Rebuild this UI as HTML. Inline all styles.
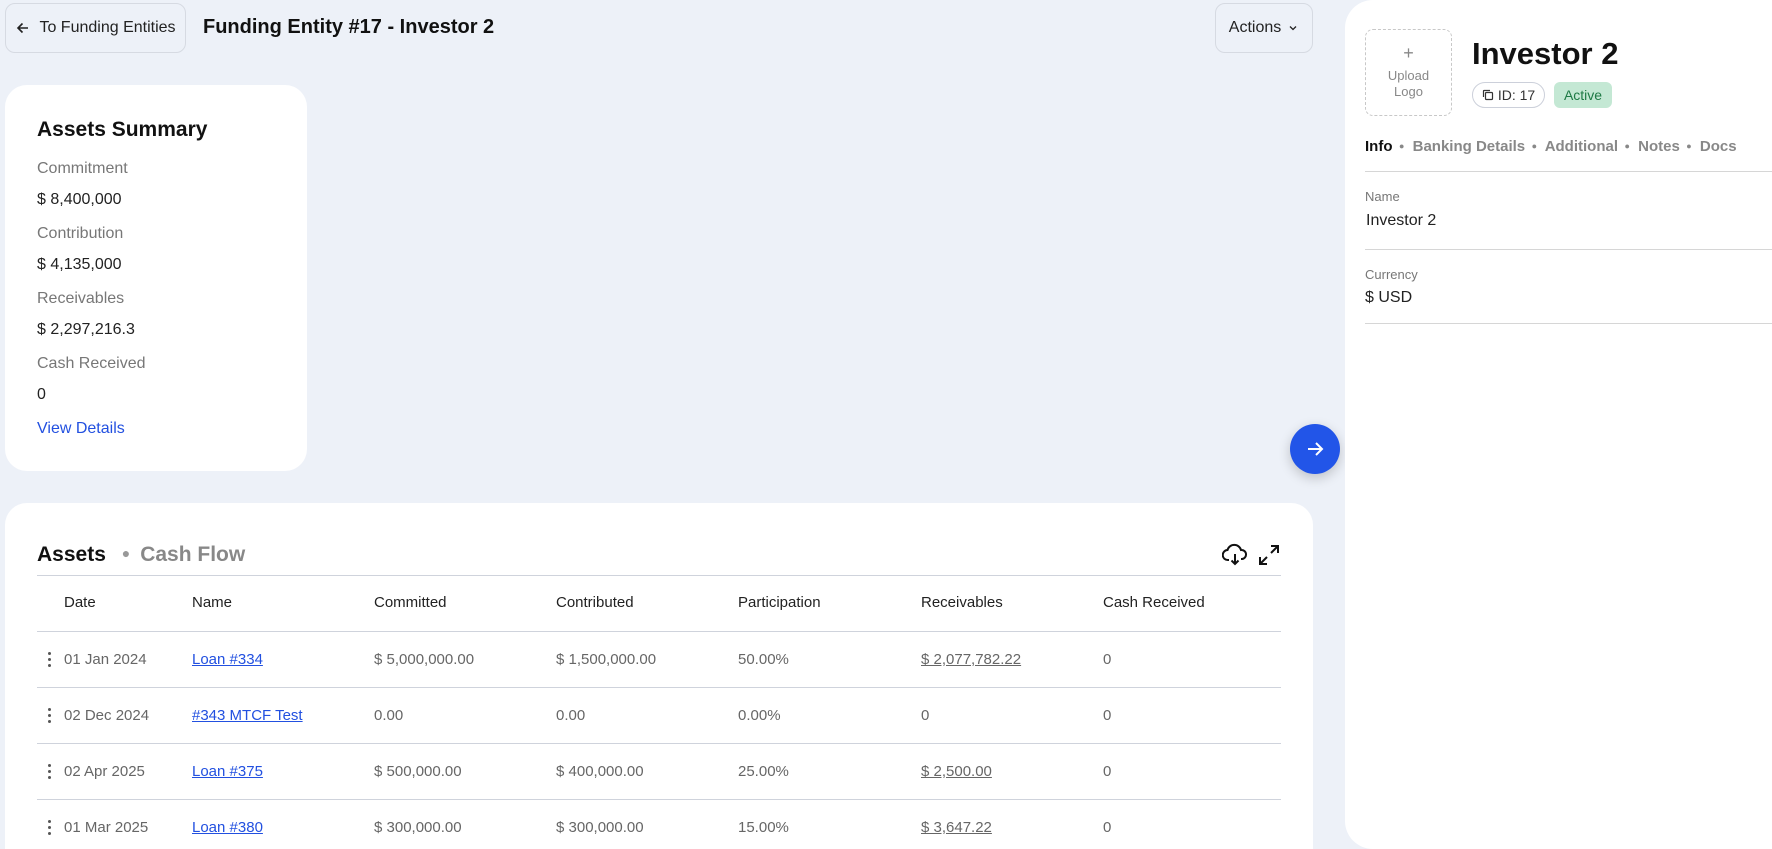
<!DOCTYPE html>
<html><head><meta charset="utf-8"><style>
*{box-sizing:border-box;margin:0;padding:0}
html{width:1772px;height:849px;overflow:hidden}
body{width:1772px;height:849px;overflow:hidden;background:#edf1f8;font-family:"Liberation Sans",sans-serif;color:#111;position:relative}
.abs{position:absolute}
.btn{border:1px solid #d6dae2;border-radius:10px;background:#edf1f8;font-size:16px;color:#222;display:flex;align-items:center;justify-content:center}
.card{background:#fff;border-radius:22px}
.lbl{color:#777;font-size:16px}
.val{color:#222;font-size:16px}
.th{position:absolute;top:594px;font-size:15px;color:#222}
.hl{position:absolute;left:37px;width:1244px;height:1px;background:#cfd3dc}
.td{position:absolute;font-size:15px;color:#666}
a{color:#2250e0;text-decoration:underline}
.u{color:#666;text-decoration:underline}
.dots{position:absolute;left:48px;width:4px}
.dots i{display:block;width:3px;height:3px;border-radius:50%;background:#555;margin-bottom:3px}
.sep{font-size:9px;margin:0 4px;vertical-align:2px}
</style></head><body>

<div class="abs btn" style="left:5px;top:3px;width:181px;height:50px">
<svg width="16" height="16" viewBox="0 0 16 16" style="margin-right:8px"><path d="M13 8H3M7.5 3.5L3 8l4.5 4.5" stroke="#222" stroke-width="1.6" fill="none"/></svg>To Funding Entities</div>
<div class="abs" style="left:203px;top:16px;font-size:20px;font-weight:bold">Funding Entity #17 - Investor 2</div>
<div class="abs btn" style="left:1215px;top:3px;width:98px;height:50px">Actions<svg width="12" height="12" viewBox="0 0 12 12" style="margin-left:6px"><path d="M3 4.5L6 7.5 9 4.5" stroke="#222" stroke-width="1.3" fill="none"/></svg></div>

<div class="abs card" style="left:5px;top:85px;width:302px;height:386px"></div>
<div class="abs" style="left:37px;top:118px;font-size:21px;font-weight:bold">Assets Summary</div>
<div class="abs lbl" style="left:37px;top:160px">Commitment</div>
<div class="abs val" style="left:37px;top:191px">$ 8,400,000</div>
<div class="abs lbl" style="left:37px;top:225px">Contribution</div>
<div class="abs val" style="left:37px;top:256px">$ 4,135,000</div>
<div class="abs lbl" style="left:37px;top:290px">Receivables</div>
<div class="abs val" style="left:37px;top:321px">$ 2,297,216.3</div>
<div class="abs lbl" style="left:37px;top:355px">Cash Received</div>
<div class="abs val" style="left:37px;top:386px">0</div>
<div class="abs" style="left:37px;top:420px;font-size:16px;color:#2250e0">View Details</div>

<div class="abs card" style="left:5px;top:503px;width:1308px;height:346px;border-radius:22px 22px 0 0"></div>
<div class="abs" style="left:37px;top:543px;font-size:21px;font-weight:bold">Assets <span style="color:#999;margin:0 10px;font-size:14px;vertical-align:3px">●</span><span style="color:#888">Cash Flow</span></div>
<svg class="abs" style="left:1222px;top:543px" width="26" height="24" viewBox="0 0 26 24"><path d="M7 17H6a5 5 0 0 1-.5-10A7 7 0 0 1 19 7a4.5 4.5 0 0 1 1 9h-1" stroke="#111" stroke-width="2" fill="none"/><path d="M13 11v10M9.5 17.5L13 21l3.5-3.5" stroke="#111" stroke-width="2" fill="none"/></svg>
<svg class="abs" style="left:1258px;top:544px" width="22" height="22" viewBox="0 0 22 22"><path d="M13 2h7v7M20 2l-7 7M9 20H2v-7M2 20l7-7" stroke="#111" stroke-width="2" fill="none"/></svg>
<div class="hl" style="top:575px"></div>
<div class="th" style="left:64px">Date</div><div class="th" style="left:192px">Name</div><div class="th" style="left:374px">Committed</div><div class="th" style="left:556px">Contributed</div><div class="th" style="left:738px">Participation</div><div class="th" style="left:921px">Receivables</div><div class="th" style="left:1103px">Cash Received</div>
<div class="hl" style="top:631px"></div>
<div class="hl" style="top:687px"></div>
<div class="hl" style="top:743px"></div>
<div class="hl" style="top:799px"></div>

<div class="dots" style="top:652px"><i></i><i></i><i></i></div>
<div class="td" style="top:651px;left:64px">01 Jan 2024</div><div class="td" style="top:651px;left:192px"><a>Loan #334</a></div><div class="td" style="top:651px;left:374px">$ 5,000,000.00</div><div class="td" style="top:651px;left:556px">$ 1,500,000.00</div><div class="td" style="top:651px;left:738px">50.00%</div><div class="td u" style="top:651px;left:921px">$ 2,077,782.22</div><div class="td" style="top:651px;left:1103px">0</div>

<div class="dots" style="top:708px"><i></i><i></i><i></i></div>
<div class="td" style="top:707px;left:64px">02 Dec 2024</div><div class="td" style="top:707px;left:192px"><a>#343 MTCF Test</a></div><div class="td" style="top:707px;left:374px">0.00</div><div class="td" style="top:707px;left:556px">0.00</div><div class="td" style="top:707px;left:738px">0.00%</div><div class="td" style="top:707px;left:921px">0</div><div class="td" style="top:707px;left:1103px">0</div>

<div class="dots" style="top:764px"><i></i><i></i><i></i></div>
<div class="td" style="top:763px;left:64px">02 Apr 2025</div><div class="td" style="top:763px;left:192px"><a>Loan #375</a></div><div class="td" style="top:763px;left:374px">$ 500,000.00</div><div class="td" style="top:763px;left:556px">$ 400,000.00</div><div class="td" style="top:763px;left:738px">25.00%</div><div class="td u" style="top:763px;left:921px">$ 2,500.00</div><div class="td" style="top:763px;left:1103px">0</div>

<div class="dots" style="top:820px"><i></i><i></i><i></i></div>
<div class="td" style="top:819px;left:64px">01 Mar 2025</div><div class="td" style="top:819px;left:192px"><a>Loan #380</a></div><div class="td" style="top:819px;left:374px">$ 300,000.00</div><div class="td" style="top:819px;left:556px">$ 300,000.00</div><div class="td" style="top:819px;left:738px">15.00%</div><div class="td u" style="top:819px;left:921px">$ 3,647.22</div><div class="td" style="top:819px;left:1103px">0</div>

<div class="abs" style="left:1290px;top:424px;width:50px;height:50px;border-radius:50%;background:#2255e8;box-shadow:0 4px 12px rgba(0,0,0,.2);display:flex;align-items:center;justify-content:center"><svg width="20" height="20" viewBox="0 0 20 20"><path d="M3 10h14M11 4l6 6-6 6" stroke="#fff" stroke-width="2" fill="none"/></svg></div>

<div class="abs" style="left:1345px;top:0;width:427px;height:849px;background:#fff;border-radius:28px 0 0 28px"></div>
<div class="abs" style="left:1365px;top:29px;width:87px;height:87px;border:1px dashed #c8c8c8;border-radius:8px;text-align:center;color:#888;font-size:13px;line-height:16px;padding-top:14px"><div style="font-size:18px;line-height:18px;margin-bottom:6px">+</div>Upload<br>Logo</div>
<div class="abs" style="left:1472px;top:36px;font-size:31px;font-weight:bold">Investor 2</div>
<div class="abs" style="left:1472px;top:82px;width:73px;height:26px;border:1px solid #ccd0da;border-radius:13px;font-size:14px;color:#333;display:flex;align-items:center;justify-content:center"><svg width="12" height="12" viewBox="0 0 12 12" style="margin-right:4px"><rect x="3.5" y="3.5" width="7" height="7" rx="1" stroke="#333" fill="none" stroke-width="1.2"/><path d="M1.5 8V2a.5.5 0 0 1 .5-.5h6" stroke="#333" fill="none" stroke-width="1.2"/></svg>ID: 17</div>
<div class="abs" style="left:1554px;top:82px;width:58px;height:26px;background:#c4e8d4;border-radius:6px;font-size:14px;color:#1e7a45;display:flex;align-items:center;justify-content:center">Active</div>
<div class="abs" style="left:1365px;top:138px;font-size:15px;font-weight:bold;color:#888;white-space:nowrap"><span style="color:#111">Info</span><span class="sep"> ●</span> Banking Details<span class="sep"> ●</span> Additional<span class="sep"> ●</span> Notes<span class="sep"> ●</span> Docs</div>
<div class="abs" style="left:1365px;top:171px;width:407px;height:1px;background:#d6d6d6"></div>
<div class="abs" style="left:1365px;top:189px;font-size:13px;color:#777">Name</div>
<div class="abs" style="left:1366px;top:212px;font-size:16px;color:#222">Investor 2</div>
<div class="abs" style="left:1365px;top:249px;width:407px;height:1px;background:#d6d6d6"></div>
<div class="abs" style="left:1365px;top:267px;font-size:13px;color:#777">Currency</div>
<div class="abs" style="left:1365px;top:289px;font-size:16px;color:#222">$ USD</div>
<div class="abs" style="left:1365px;top:323px;width:407px;height:1px;background:#d6d6d6"></div>
</body></html>
